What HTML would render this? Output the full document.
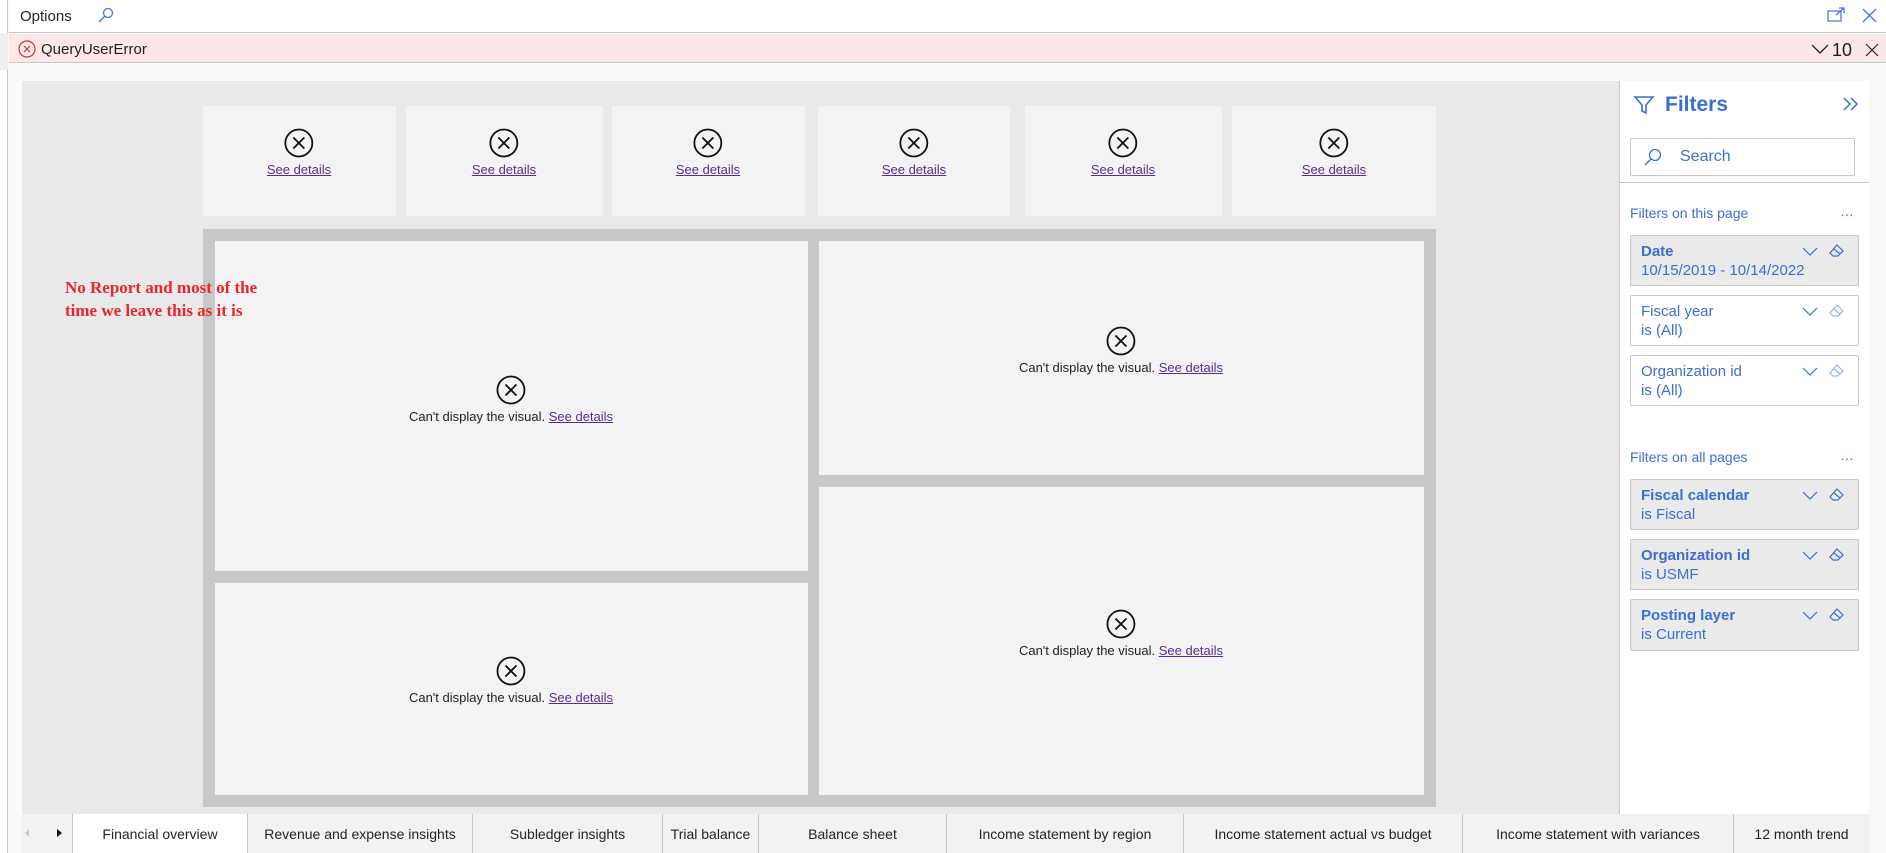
<!DOCTYPE html>
<html><head><meta charset="utf-8"><style>
*{margin:0;padding:0;box-sizing:border-box}
body{width:1886px;height:853px;overflow:hidden;background:#faf9f8;font-family:"Liberation Sans",sans-serif;position:relative}
.a{position:absolute}
.card{position:absolute;background:#f3f3f3}
.err{position:absolute;text-align:center;font-size:13px;color:#222;white-space:nowrap;transform:translateX(-50%)}
.err svg{display:block;margin:0 auto 4px}
.lnk{color:#5b2b8e;text-decoration:underline}
.fc{position:absolute;left:1630px;width:229px;border:1px solid #c8c8c8;border-radius:2px;background:#fff;color:#3b6fd0;font-size:15px;padding:6px 0 0 10px;line-height:19px}
.fc.g{background:#eaeaea}
.fc b{font-weight:bold}
.tab{position:absolute;top:814px;height:39px;border-right:1px solid #c8c8c8;font-size:14px;color:#252423;text-align:center;line-height:40px;background:#f3f2f1;white-space:nowrap;overflow:hidden}
</style></head><body>
<div class="a" style="left:0;top:0;width:8px;height:853px;background:#fff;border-right:1px solid #c8c8c8"></div>
<div class="a" style="left:0;top:33px;width:8px;height:37px;background:#eee"></div>
<div class="a" style="left:9px;top:0;width:1877px;height:33px;background:#fff;border-bottom:1px solid #c8c8c8"></div>
<div class="a" style="left:20px;top:8px;font-size:15px;color:#252423">Options</div>
<svg class="a" style="left:97px;top:6px" width="18" height="18" viewBox="0 0 18 18"><circle cx="11" cy="7" r="4.5" fill="none" stroke="#4a6fd8" stroke-width="1.3"/><path d="M7.8 10.2 L2 16" stroke="#4a6fd8" stroke-width="1.3"/></svg>
<svg class="a" style="left:1826px;top:6px" width="20" height="18" viewBox="0 0 20 18"><rect x="2" y="5" width="13" height="10" fill="none" stroke="#4a6fd8" stroke-width="1.2"/><path d="M10 9 L18 2 M13 2 H18 V7" fill="none" stroke="#4a6fd8" stroke-width="1.2"/></svg>
<svg class="a" style="left:1862px;top:8px" width="15" height="15"><path d="M1 1 L14 14 M14 1 L1 14" stroke="#4a6fd8" stroke-width="1.3"/></svg>
<div class="a" style="left:9px;top:34px;width:1877px;height:29px;background:#fde7e9;border-bottom:1px solid #c8c8c8"></div>
<svg class="a" style="left:18px;top:40px" width="18" height="18"><circle cx="9" cy="9" r="8" fill="none" stroke="#c0392b" stroke-width="1.2"/><path d="M6 6 L12 12 M12 6 L6 12" stroke="#c0392b" stroke-width="1.2"/></svg>
<div class="a" style="left:41px;top:41px;font-size:15px;color:#201f1e">QueryUserError</div>
<svg class="a" style="left:1811px;top:44px" width="18" height="11"><path d="M1 1 L9 9 L17 1" fill="none" stroke="#222" stroke-width="1.3"/></svg>
<div class="a" style="left:1832px;top:40px;font-size:18px;color:#201f1e">10</div>
<svg class="a" style="left:1865px;top:43px" width="14" height="14"><path d="M1 1 L13 13 M13 1 L1 13" stroke="#222" stroke-width="1.2"/></svg>
<div class="a" style="left:22px;top:81px;width:1597px;height:733px;background:#e9e9e9"></div>
<div class="card" style="left:203px;top:106px;width:193px;height:110px"></div>
<div class="card" style="left:406px;top:106px;width:197px;height:110px"></div>
<div class="card" style="left:612px;top:106px;width:193px;height:110px"></div>
<div class="card" style="left:818px;top:106px;width:192px;height:110px"></div>
<div class="card" style="left:1025px;top:106px;width:197px;height:110px"></div>
<div class="card" style="left:1232px;top:106px;width:204px;height:110px"></div>
<div class="a" style="left:203px;top:229px;width:1233px;height:578px;background:#c8c8c8"></div>
<div class="card" style="left:215px;top:241px;width:593px;height:330px"></div>
<div class="card" style="left:215px;top:583px;width:593px;height:212px"></div>
<div class="card" style="left:819px;top:241px;width:605px;height:234px"></div>
<div class="card" style="left:819px;top:487px;width:605px;height:308px"></div>
<div id="tops"></div>
<div class="a" style="left:65px;top:276px;font-family:'Liberation Serif',serif;font-weight:bold;font-size:17px;color:#e8262b;line-height:23px">No Report and most of the<br>time we leave this as it is</div>
<script>
function ic(){return '<svg width="30" height="30"><circle cx="15" cy="15" r="13.5" fill="none" stroke="#111" stroke-width="1.8"/><path d="M9.5 9.5 L20.5 20.5 M20.5 9.5 L9.5 20.5" stroke="#111" stroke-width="1.8"/></svg>'}
var tops=[299,504,708,914,1123,1334],h='';
tops.forEach(function(x){h+='<div class="err" style="left:'+x+'px;top:128px">'+ic()+'<span class="lnk">See details</span></div>'});
[[511,375],[511,656],[1121,326],[1121,609]].forEach(function(p){h+='<div class="err" style="left:'+p[0]+'px;top:'+p[1]+'px">'+ic()+'Can\'t display the visual. <span class="lnk">See details</span></div>'});
document.getElementById('tops').outerHTML=h;
</script>
<div class="a" style="left:1619px;top:81px;width:250px;height:733px;background:#fff;border-left:1px solid #c8c8c8"></div>
<svg class="a" style="left:1633px;top:94px" width="22" height="22"><path d="M2 3 H20 L13 11 V19 L9 17 V11 Z" fill="none" stroke="#3b6fd0" stroke-width="1.6"/></svg>
<div class="a" style="left:1665px;top:93px;font-size:21px;font-weight:bold;color:#3b6fd0">Filters</div>
<svg class="a" style="left:1842px;top:96px" width="18" height="16"><path d="M2 2 L8 8 L2 14 M9 2 L15 8 L9 14" fill="none" stroke="#3b6fd0" stroke-width="1.5"/></svg>
<div class="a" style="left:1630px;top:138px;width:225px;height:38px;border:1px solid #c8c8c8;border-radius:2px"></div>
<svg class="a" style="left:1643px;top:147px" width="20" height="20"><circle cx="12" cy="8" r="5.5" fill="none" stroke="#3b6fd0" stroke-width="1.3"/><path d="M8 12 L2 18" stroke="#3b6fd0" stroke-width="1.3"/></svg>
<div class="a" style="left:1680px;top:148px;font-size:16px;color:#3b6fd0">Search</div>
<div class="a" style="left:1620px;top:182px;width:249px;height:1px;background:#c8c8c8"></div>
<div class="a" style="left:1630px;top:205px;font-size:14px;color:#3b6fd0">Filters on this page</div>
<div class="a" style="left:1840px;top:203px;font-size:14px;color:#3b6fd0">…</div>
<div class="fc g" style="top:235px;height:51px"><b>Date</b><br>10/15/2019 - 10/14/2022</div>
<div class="fc" style="top:295px;height:51px">Fiscal year<br>is (All)</div>
<div class="fc" style="top:355px;height:51px">Organization id<br>is (All)</div>
<div class="a" style="left:1630px;top:449px;font-size:14px;color:#3b6fd0">Filters on all pages</div>
<div class="a" style="left:1840px;top:447px;font-size:14px;color:#3b6fd0">…</div>
<div class="fc g" style="top:479px;height:51px"><b>Fiscal calendar</b><br>is Fiscal</div>
<div class="fc g" style="top:539px;height:51px"><b>Organization id</b><br>is USMF</div>
<div class="fc g" style="top:599px;height:52px"><b>Posting layer</b><br>is Current</div>
<script>
var tt=[[246,'#3b6fd0'],[306,'#9db3e6'],[366,'#9db3e6'],[490,'#3b6fd0'],[550,'#3b6fd0'],[610,'#3b6fd0']],s='';
tt.forEach(function(t){s+='<svg class="a" style="left:1801px;top:'+t[0]+'px" width="18" height="12"><path d="M2 2 L9 9 L16 2" fill="none" stroke="#3b6fd0" stroke-width="1.2"/></svg><svg class="a" style="left:1827px;top:'+(t[0]-3)+'px" width="18" height="16"><path d="M10 2 L16 8 L11 13 H6 L3 10 Z M6.5 5.5 L13 11" fill="none" stroke="'+t[1]+'" stroke-width="1.2"/></svg>'});
document.write(s);
</script>
<div class="a" style="left:22px;top:814px;width:1847px;height:39px;background:#f3f2f1"></div>
<div class="a" style="left:25px;top:829px;width:0;height:0;border-top:4px solid transparent;border-bottom:4px solid transparent;border-right:4px solid #c8c8c8"></div>
<div class="a" style="left:57px;top:829px;width:0;height:0;border-top:4px solid transparent;border-bottom:4px solid transparent;border-left:5px solid #111"></div>
<div class="tab" style="left:72px;width:176px;background:#fff;border-left:1px solid #c8c8c8">Financial overview</div>
<div class="tab" style="left:248px;width:225px">Revenue and expense insights</div>
<div class="tab" style="left:473px;width:190px">Subledger insights</div>
<div class="tab" style="left:663px;width:96px">Trial balance</div>
<div class="tab" style="left:759px;width:188px">Balance sheet</div>
<div class="tab" style="left:947px;width:237px">Income statement by region</div>
<div class="tab" style="left:1184px;width:279px">Income statement actual vs budget</div>
<div class="tab" style="left:1463px;width:271px">Income statement with variances</div>
<div class="tab" style="left:1734px;width:135px;border-right:none">12 month trend</div>
</body></html>
